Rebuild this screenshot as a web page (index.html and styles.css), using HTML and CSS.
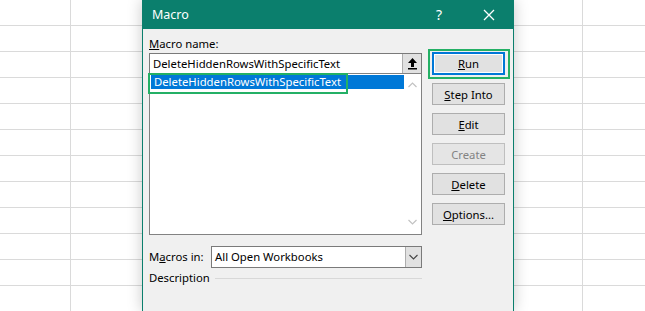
FILE: index.html
```html
<!DOCTYPE html>
<html lang="en">
<head>
  <meta charset="UTF-8">
  <title>Macro</title>
  <link rel="stylesheet" href="styles.css">
</head>
<body>
  <div class="sheet"></div>

  <div class="dialog">
    <div class="titlebar">
      <span class="title">Macro</span>
      <span class="help">?</span>
      <span class="close">
        <svg width="12" height="12" viewBox="0 0 12 12"><path d="M1 1 L11 11 M11 1 L1 11" stroke="#fff" stroke-width="1.3"/></svg>
      </span>
    </div>

    <div class="content">
      <div class="left">
        <label class="label"><u>M</u>acro name:</label>
        <div class="name-row">
          <div class="name-input">DeleteHiddenRowsWithSpecificText</div>
          <div class="pick-btn">
            <svg width="11" height="13" viewBox="0 0 11 13"><path d="M5.5 1 L1 6 H4 V10 H7 V6 H10 Z" fill="#000"/><rect x="1" y="11" width="9" height="1.5" fill="#000"/></svg>
          </div>
        </div>
        <div class="list">
          <div class="items">
            <div class="item selected"><span class="mark">DeleteHiddenRowsWithSpecificText</span></div>
          </div>
          <div class="scroll">
            <svg width="9" height="6" viewBox="0 0 9 6"><path d="M0.5 5 L4.5 1 L8.5 5" fill="none" stroke="#c2c2c2" stroke-width="1.2"/></svg>
            <svg width="9" height="6" viewBox="0 0 9 6"><path d="M0.5 1 L4.5 5 L8.5 1" fill="none" stroke="#c2c2c2" stroke-width="1.2"/></svg>
          </div>
        </div>
        <div class="in-row">
          <span class="label">M<u>a</u>cros in:</span>
          <div class="select">
            <span class="select-text">All Open Workbooks</span>
            <span class="select-btn">
              <svg width="9" height="6" viewBox="0 0 9 6"><path d="M0.5 1 L4.5 5 L8.5 1" fill="none" stroke="#444" stroke-width="1.1"/></svg>
            </span>
          </div>
        </div>
        <div class="desc-row">
          <span class="label">Description</span>
          <span class="rule"></span>
        </div>
      </div>

      <div class="buttons">
        <div class="run-frame"><button class="btn default"><u>R</u>un</button></div>
        <button class="btn"><u>S</u>tep Into</button>
        <button class="btn"><u>E</u>dit</button>
        <button class="btn disabled">Create</button>
        <button class="btn"><u>D</u>elete</button>
        <button class="btn"><u>O</u>ptions...</button>
      </div>
    </div>
  </div>
</body>
</html>
```

FILE: styles.css
```css
body {
  margin: 0;
  width: 645px;
  height: 311px;
  overflow: hidden;
  font-family: "Noto Sans", "Open Sans", sans-serif;
  font-size: 11.3px;
  color: #000;
  background: #fff;
  position: relative;
}
.sheet {
  width: 100%;
  height: 100%;
  background-color: #fff;
  background-image:
    linear-gradient(to bottom, transparent 25px, #dadada 25px, #dadada 26px, transparent 26px),
    linear-gradient(to right, transparent 70px, #dadada 70px, #dadada 71px, transparent 71px, transparent 582px, #dadada 582px, #dadada 583px, transparent 583px);
  background-size: 100% 26px, 100% 100%;
  background-repeat: repeat-y, no-repeat;
}
.dialog {
  position: absolute;
  left: 142px;
  top: 0;
  width: 370px;
  height: 311px;
  overflow: hidden;
  background: #f0f0f0;
  border-left: 1px solid #0b7f6d;
  border-right: 1px solid #0b7f6d;
  box-shadow: 0 0 14px rgba(0, 0, 0, 0.22);
}
.titlebar {
  height: 29px;
  background: #0b7f6d;
  color: #fff;
  display: flex;
  align-items: center;
  padding-left: 9px;
}
.title {
  font-size: 12.5px;
  flex: 1;
}
.help {
  font-size: 14px;
  width: 20px;
  margin-right: 27px;
}
.close {
  width: 30px;
  display: flex;
}
.content {
  display: flex;
  padding: 7px 0 0 6px;
}
.left {
  width: 273px;
  display: flex;
  flex-direction: column;
}
.label {
  line-height: 16px;
}
.left > .label {
  margin-bottom: 1px;
}
.name-row {
  display: flex;
  height: 19px;
  border: 1px solid #7a7a7a;
  border-bottom: none;
  background: #fff;
}
.name-input {
  flex: 1;
  padding-left: 3px;
  line-height: 19px;
}
.pick-btn {
  width: 18px;
  background: #e1e1e1;
  border-left: 1px solid #adadad;
  display: flex;
  align-items: center;
  justify-content: center;
}
.list {
  height: 160px;
  border: 1px solid #828282;
  background: #fff;
  display: flex;
}
.items {
  flex: 1;
  padding: 1px 0 0 1px;
}
.item {
  height: 14px;
  line-height: 14px;
  padding-left: 3px;
}
.item.selected {
  background: #0078d7;
  color: #fff;
}
.mark {
  position: relative;
  display: inline-block;
  height: 14px;
}
.mark::after {
  content: "";
  position: absolute;
  left: -6px;
  right: -7px;
  top: -2px;
  bottom: -5px;
  border: 2px solid #24b065;
}
.scroll {
  width: 17px;
  display: flex;
  flex-direction: column;
  align-items: center;
  justify-content: space-between;
  padding: 8px 0 9px;
}
.in-row {
  display: flex;
  align-items: center;
  margin-top: 11px;
}
.in-row .label {
  width: 62px;
}
.select {
  flex: 1;
  height: 20px;
  border: 1px solid #7a7a7a;
  background: #fff;
  display: flex;
}
.select-text {
  flex: 1;
  padding-left: 3px;
  line-height: 20px;
}
.select-btn {
  width: 15px;
  background: #e1e1e1;
  border-left: 1px solid #adadad;
  display: flex;
  align-items: center;
  justify-content: center;
}
.desc-row {
  display: flex;
  align-items: center;
  margin-top: 2px;
}
.rule {
  flex: 1;
  height: 1px;
  background: #d8d8d8;
  margin-left: 5px;
  margin-top: 1px;
}
.buttons {
  display: flex;
  flex-direction: column;
  margin-left: 10px;
  margin-top: 13px;
}
.btn {
  width: 73px;
  height: 22px;
  padding: 0;
  margin-bottom: 8px;
  font-family: inherit;
  font-size: 11.3px;
  color: #000;
  background: #e1e1e1;
  border: 1px solid #adadad;
}
.btn.disabled {
  color: #838383;
  background: #e5e5e5;
  border-color: #bfbfbf;
}
.run-frame {
  display: flex;
  margin: 0 0 4px -4px;
  padding: 1px 3px 2px 2px;
  border: 2px solid #24b065;
  width: 73px;
}
.run-frame .btn {
  margin: 0;
  border: 2px solid #0078d7;
  box-shadow: inset 0 0 0 1px #fff;
  height: 23px;
}
```
